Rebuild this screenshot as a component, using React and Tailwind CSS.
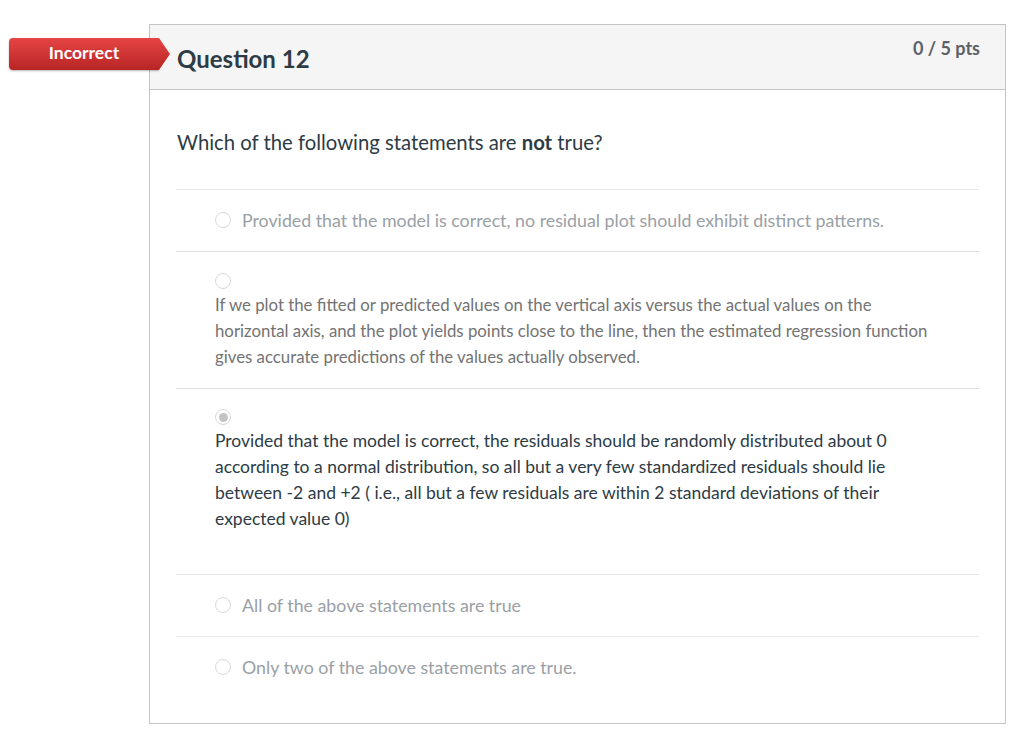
import React from "react";

const font = { fontFamily: "Lato, 'Open Sans', sans-serif" };

function Radio({ selected }) {
  return (
    <div className="flex h-[16px] w-[16px] shrink-0 items-center justify-center rounded-full border border-[#d9d9d9] bg-white">
      {selected && <div className="h-[9px] w-[9px] rounded-full bg-[#c4c4c4]" />}
    </div>
  );
}

export default function App() {
  return (
    <div className="relative min-h-[743px] w-[1024px] bg-white" style={font}>
      <div className="pl-[149px] pt-[24px]">
        <div className="w-[857px] h-[700px] border border-[#c4c4c4] bg-white">
          <div className="flex h-[65px] justify-between border-b border-[#c4c4c4] bg-[#f5f5f5] pl-[27px] pr-[25px]">
            <div className="pt-[19px] text-[24px] font-bold leading-[30px] text-[#2d3b45]">Question 12</div>
            <div className="pt-[12px] text-[18px] font-bold leading-[22px] text-[#5b6166]">0 / 5 pts</div>
          </div>
          <div className="pl-[26px] pr-[26px] pt-[38px]">
            <p className="pl-px text-[20.3px] leading-[28px] text-[#2d3b45]">
              Which of the following statements are <strong className="font-bold">not</strong> true?
            </p>
            <div className="mt-[33px]">
              <div className="flex items-center gap-[11px] border-t border-[#e8e8e8] pl-[39px] pt-[18px] pb-[19px] text-[17.8px] leading-[24px] text-[#9aa0a5]">
                <Radio />
                <span>Provided that the model is correct, no residual plot should exhibit distinct patterns.</span>
              </div>
              <div className="border-t border-[#e0e0e0] pl-[39px] pt-[21px] pb-[18px]">
                <Radio />
                <div className="mt-[3px] whitespace-nowrap text-[16.8px] leading-[26px] text-[#737373]">
                  If we plot the fitted or predicted values on the vertical axis versus the actual values on the
                  <br />
                  horizontal axis, and the plot yields points close to the line, then the estimated regression function
                  <br />
                  gives accurate predictions of the values actually observed.
                </div>
              </div>
              <div className="border-t border-[#e0e0e0] pl-[39px] pt-[20px] pb-[42px]">
                <Radio selected />
                <div className="mt-[3px] whitespace-nowrap text-[17.5px] leading-[26px] text-[#2d3b45]">
                  Provided that the model is correct, the residuals should be randomly distributed about 0
                  <br />
                  according to a normal distribution, so all but a very few standardized residuals should lie
                  <br />
                  between -2 and +2 ( i.e., all but a few residuals are within 2 standard deviations of their
                  <br />
                  expected value 0)
                </div>
              </div>
              <div className="flex items-center gap-[11px] border-t border-[#e8e8e8] pl-[39px] pt-[18px] pb-[19px] text-[17.8px] leading-[24px] text-[#9aa0a5]">
                <Radio />
                <span>All of the above statements are true</span>
              </div>
              <div className="flex items-center gap-[11px] border-t border-[#e8e8e8] pl-[39px] pt-[18px] pb-[19px] text-[17.8px] leading-[24px] text-[#9aa0a5]">
                <Radio />
                <span>Only two of the above statements are true.</span>
              </div>
            </div>
          </div>
        </div>
      </div>
      <div className="absolute left-[9px] top-[38px] flex h-[32px] items-center">
        <div className="flex h-[32px] w-[150px] items-center justify-center rounded-l-[4px] bg-gradient-to-b from-[#e64444] to-[#b82424] pb-px text-[17.5px] font-bold text-white shadow-[0_1px_2px_rgba(0,0,0,0.3)]">
          Incorrect
        </div>
        <svg width="12" height="32" viewBox="0 0 12 32" className="-ml-px">
          <defs>
            <linearGradient id="g" x1="0" y1="0" x2="0" y2="1">
              <stop offset="0" stopColor="#e64444" />
              <stop offset="1" stopColor="#b82424" />
            </linearGradient>
          </defs>
          <path d="M0 0 L1 0 L12 16 L1 32 L0 32 Z" fill="url(#g)" />
        </svg>
      </div>
    </div>
  );
}
